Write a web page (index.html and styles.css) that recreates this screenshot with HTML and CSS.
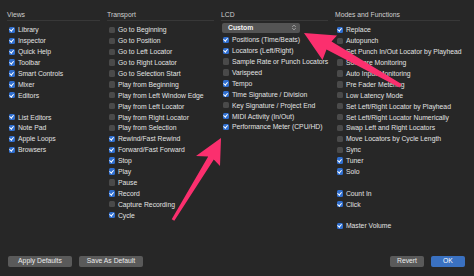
FILE: index.html
```html
<!DOCTYPE html>
<html lang="en">
<head>
    <meta charset="UTF-8">
    <meta name="viewport" content="width=device-width, initial-scale=1.0">
    <title>Customize Control Bar and Display</title>
    <link rel="stylesheet" href="styles.css">
</head>
<body>
    <div class="prefs">
        <section class="group">
            <h2>Views</h2>
            <ul class="opts">
                <li class="on"><span class="box"></span>Library</li>
                <li class="on"><span class="box"></span>Inspector</li>
                <li class="on"><span class="box"></span>Quick Help</li>
                <li class="on"><span class="box"></span>Toolbar</li>
                <li class="on"><span class="box"></span>Smart Controls</li>
                <li class="on"><span class="box"></span>Mixer</li>
                <li class="on"><span class="box"></span>Editors</li>
                <li class="blank"></li>
                <li class="on"><span class="box"></span>List Editors</li>
                <li class="on"><span class="box"></span>Note Pad</li>
                <li class="on"><span class="box"></span>Apple Loops</li>
                <li class="on"><span class="box"></span>Browsers</li>
            </ul>
        </section>
        <section class="group">
            <h2>Transport</h2>
            <ul class="opts">
                <li><span class="box"></span>Go to Beginning</li>
                <li><span class="box"></span>Go to Position</li>
                <li><span class="box"></span>Go to Left Locator</li>
                <li><span class="box"></span>Go to Right Locator</li>
                <li><span class="box"></span>Go to Selection Start</li>
                <li><span class="box"></span>Play from Beginning</li>
                <li><span class="box"></span>Play from Left Window Edge</li>
                <li><span class="box"></span>Play from Left Locator</li>
                <li><span class="box"></span>Play from Right Locator</li>
                <li><span class="box"></span>Play from Selection</li>
                <li class="on"><span class="box"></span>Rewind/Fast Rewind</li>
                <li class="on"><span class="box"></span>Forward/Fast Forward</li>
                <li class="on"><span class="box"></span>Stop</li>
                <li class="on"><span class="box"></span>Play</li>
                <li><span class="box"></span>Pause</li>
                <li class="on"><span class="box"></span>Record</li>
                <li><span class="box"></span>Capture Recording</li>
                <li class="on"><span class="box"></span>Cycle</li>
            </ul>
        </section>
        <section class="group">
            <h2>LCD</h2>
            <div class="popup">
                <span>Custom</span>
                <svg class="stepper" width="6" height="7" viewBox="0 0 6 7">
                    <path d="M1.2 2.8 L3 1.2 L4.8 2.8 M1.2 4.2 L3 5.8 L4.8 4.2" fill="none" stroke="#a8a8a8" stroke-width="0.9"/>
                </svg>
            </div>
            <ul class="opts opts-lcd">
                <li class="on"><span class="box"></span>Positions (Time/Beats)</li>
                <li class="on"><span class="box"></span>Locators (Left/Right)</li>
                <li><span class="box"></span>Sample Rate or Punch Locators</li>
                <li><span class="box"></span>Varispeed</li>
                <li class="on"><span class="box"></span>Tempo</li>
                <li class="on"><span class="box"></span>Time Signature / Division</li>
                <li><span class="box"></span>Key Signature / Project End</li>
                <li class="on"><span class="box"></span>MIDI Activity (In/Out)</li>
                <li class="on"><span class="box"></span>Performance Meter (CPU/HD)</li>
            </ul>
        </section>
        <section class="group">
            <h2>Modes and Functions</h2>
            <ul class="opts">
                <li class="on"><span class="box"></span>Replace</li>
                <li><span class="box"></span>Autopunch</li>
                <li><span class="box"></span>Set Punch In/Out Locator by Playhead</li>
                <li><span class="box"></span>Software Monitoring</li>
                <li><span class="box"></span>Auto Input Monitoring</li>
                <li><span class="box"></span>Pre Fader Metering</li>
                <li><span class="box"></span>Low Latency Mode</li>
                <li><span class="box"></span>Set Left/Right Locator by Playhead</li>
                <li><span class="box"></span>Set Left/Right Locator Numerically</li>
                <li><span class="box"></span>Swap Left and Right Locators</li>
                <li><span class="box"></span>Move Locators by Cycle Length</li>
                <li><span class="box"></span>Sync</li>
                <li class="on"><span class="box"></span>Tuner</li>
                <li class="on"><span class="box"></span>Solo</li>
                <li class="blank"></li>
                <li class="on"><span class="box"></span>Count In</li>
                <li class="on"><span class="box"></span>Click</li>
                <li class="blank"></li>
                <li class="on"><span class="box"></span>Master Volume</li>
            </ul>
        </section>
    </div>

    <footer class="actions">
        <div class="btn-row">
            <button class="btn btn-wide">Apply Defaults</button>
            <button class="btn btn-wide">Save As Default</button>
        </div>
        <div class="btn-row">
            <button class="btn">Revert</button>
            <button class="btn btn-primary">OK</button>
        </div>
    </footer>

    <!-- annotation arrows drawn over the dialog -->
    <svg class="arrows" width="474" height="276" viewBox="0 0 474 276">
        <polygon fill="#fb2f6e" points="304,33 337,35.5 331.5,41.5 401.5,84 399.5,87.5 326.5,49.5 322.5,60"/>
        <polygon fill="#fb2f6e" points="221,138 220,166 213.8,159.5 174.3,220.8 171.7,219.2 208.2,156.4 196,156"/>
    </svg>
</body>
</html>
```

FILE: styles.css
```css
body {
    margin: 0;
    width: 474px;
    height: 276px;
    display: flex;
    flex-direction: column;
    background: #272727;
    color: #e2e2e2;
    font-family: "Liberation Sans", Arial, sans-serif;
    font-size: 6.8px;
    overflow: hidden;
}
.prefs {
    flex: 1;
    display: grid;
    grid-template-columns: 100px 114px 114px 132px;
    padding: 9px 0 0 7px;
}
.group h2 {
    margin: 0 7px 0 0;
    height: 11px;
    line-height: 11px;
    font-size: 6.8px;
    font-weight: normal;
    color: #cfcfcf;
    border-bottom: 1px solid #383838;
}
.opts {
    list-style: none;
    margin: 3.5px 0 0;
    padding: 0 0 0 1.5px;
}
.opts-lcd {
    margin-top: 0;
}
.opts li {
    height: 10.9px;
    display: flex;
    align-items: center;
    gap: 3px;
    white-space: nowrap;
}
.box {
    width: 6.4px;
    height: 6.4px;
    flex: none;
    border-radius: 1.5px;
    background: #4a4a4a;
    display: flex;
    align-items: center;
    justify-content: center;
}
.on .box {
    background: #2f6ecf;
}
.on .box::after {
    content: "";
    display: block;
    width: 1.6px;
    height: 3.4px;
    margin-top: -1px;
    border-right: 1.1px solid #fff;
    border-bottom: 1.1px solid #fff;
    transform: rotate(40deg);
}
.popup {
    width: 78px;
    height: 10px;
    margin: 1.5px 0 1.9px 1px;
    padding: 0 3px 0 6px;
    box-sizing: border-box;
    display: flex;
    align-items: center;
    justify-content: space-between;
    background: #545454;
    border-radius: 2px;
    color: #f2f2f2;
    font-weight: bold;
}
.stepper {
    display: block;
}
.actions {
    display: flex;
    justify-content: space-between;
    padding: 0 9px 9.5px 8px;
}
.btn-row {
    display: flex;
    gap: 7px;
}
.btn {
    width: 34px;
    height: 10.2px;
    padding: 0;
    border: none;
    border-radius: 2px;
    background: #5a5a5a;
    color: #ececec;
    font-family: inherit;
    font-size: 6.8px;
    line-height: 10px;
}
.btn-wide {
    width: 64px;
}
.btn-primary {
    background: #3a71c1;
    color: #fff;
}
.arrows {
    position: absolute;
    left: 0;
    top: 0;
    pointer-events: none;
}
```
